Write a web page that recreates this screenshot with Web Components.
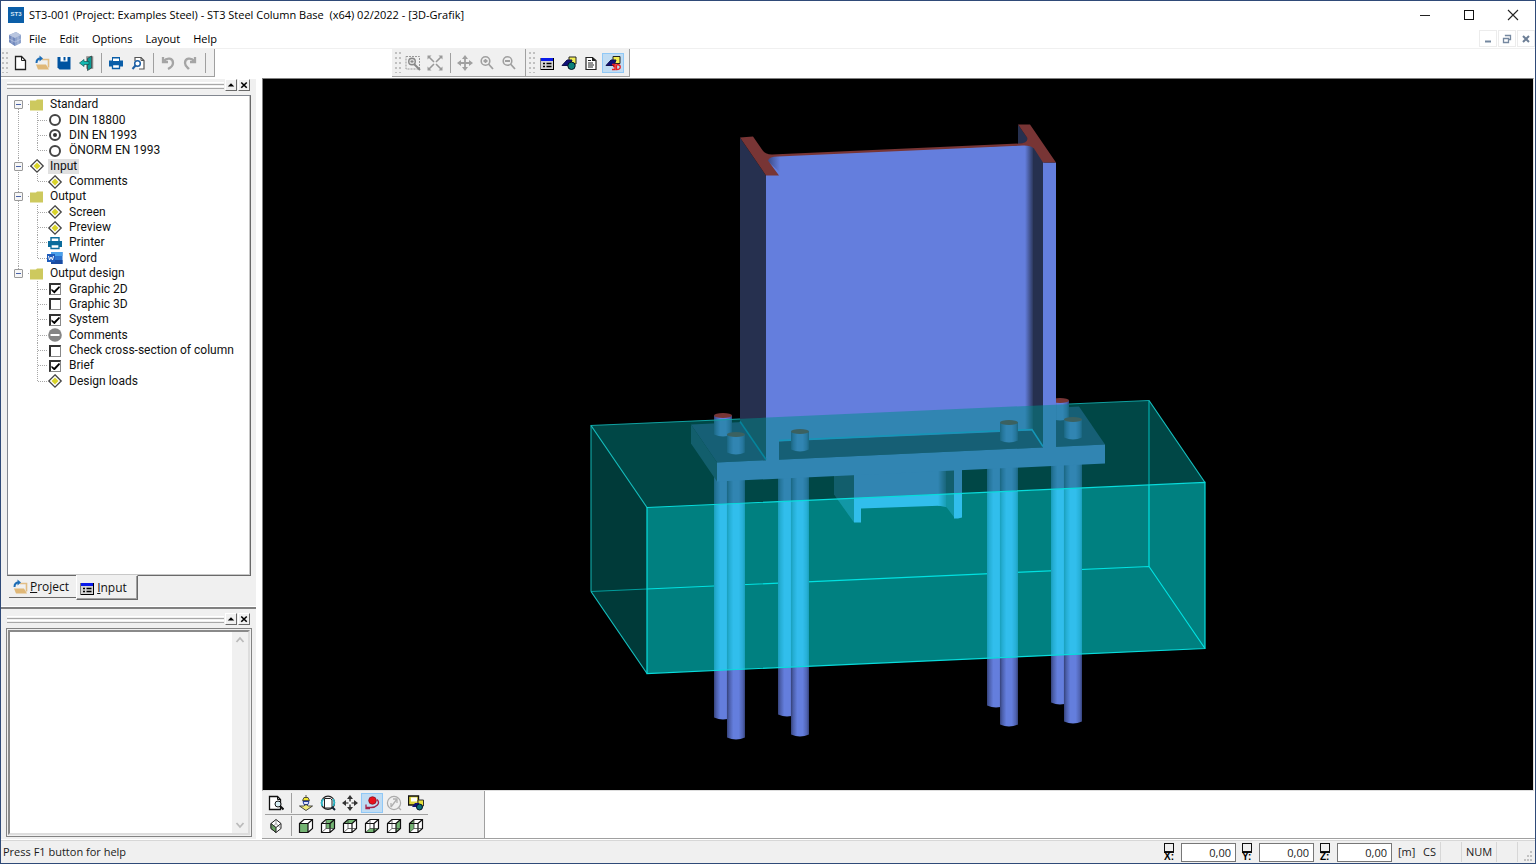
<!DOCTYPE html>
<html lang="en">
<head>
<meta charset="utf-8">
<title>ST3-001 - ST3 Steel Column Base</title>
<style>
html,body{margin:0;height:100%}
body{font:11px/16px "Open Sans","Noto Sans",sans-serif;color:#1a1a1a;background:#fff}
</style>
</head>
<body>
<app-window></app-window>
<script>
const ICONS = {
  app:`<rect width="16" height="16" fill="#0a5ea8"/><text x="8" y="9" font-family="Liberation Sans,sans-serif" font-size="6" font-weight="bold" fill="#d5e6f5" text-anchor="middle">ST3</text>`,
  cube:`<path d="M2 4 9 1l5 3v8l-6 3-6-4z" fill="#8ea3cc"/><path d="M2 4l6 3v8l-6-4z" fill="#7289bd"/><path d="M2 4 9 1l5 3-6 3z" fill="#b9c6e0"/><path d="M5 5.500v7M2 8l6 3 6-3M11 5.500v8" stroke="#c9d4ea" stroke-width=".6" fill="none"/>`,
  doc:`<path d="M3.500 1.500h6l4 4v9h-10z" fill="#fff" stroke="#222" stroke-width="1.300"/><path d="M9.500 1.500v4h4" fill="none" stroke="#222"/>`,
  open:`<path d="M8 4.500h6.500v8" fill="none" stroke="#e2bd84" stroke-width="1.600"/><path d="M2 9.500h10l3 5H4z" fill="#e0b878"/><path d="M2.500 8c0-3 1-4.500 4-4.500" fill="none" stroke="#1c6cb5" stroke-width="2"/><path d="M5.500.500 9 3.500 5.500 6.500z" fill="#1c6cb5"/>`,
  save:`<path d="M1.500 2h13v12.500H3.500l-2-2z" fill="#0053a0"/><path d="M4.500 1.500h7v5h-7z" fill="#fff"/><path d="M7.500 2h2v3.500h-2z" fill="#0053a0"/>`,
  exit:`<path d="M9 2h5.500v11H9z" fill="#fff" stroke="#888" stroke-width="1.500"/><path d="M9.500 3.500l4-2.500v12l-4 2.500z" fill="#0a9c96" stroke="#344" stroke-width=".8"/><path d="M6 4.500 1.500 8 6 11.500V9.500h5v-3H6z" fill="#14b8b0" stroke="#155" stroke-width=".7"/>`,
  print:`<path d="M4 2h8v4H4z" fill="#0a5ea8"/><path d="M1 5.500h14v6H1z" fill="#0a5ea8"/><path d="M5 3.500h6V6H5z" fill="#fff"/><path d="M4.500 9.500h7v4h-7z" fill="#fff" stroke="#0a5ea8" stroke-width="1.300"/>`,
  preview:`<path d="M5 6V2.500h6l3 3v8.500H9" fill="#fff" stroke="#555" stroke-width="1.200"/><path d="M11 2.500v3h3" fill="none" stroke="#555"/><circle cx="7.500" cy="8.500" r="2.800" fill="#fff" stroke="#1c5fa5" stroke-width="1.500"/><path d="M5.500 10.500 2.500 14" stroke="#1c5fa5" stroke-width="2"/>`,
  undo:`<path d="M3 2v5h5M3.500 6.500C7 2 13 3 13 8c0 3-3 5-5 6" fill="none" stroke="#a5a5a5" stroke-width="2.300"/>`,
  redo:`<path d="M13 2v5H8M12.500 6.500C9 2 3 3 3 8c0 3 2 4 4 6" fill="none" stroke="#a5a5a5" stroke-width="2.300"/>`,
  zoomsel:`<rect x="1" y="1.500" width="13.500" height="12.500" fill="none" stroke="#999" stroke-dasharray="2 1"/><circle cx="7" cy="6.500" r="3.300" fill="#ddd" stroke="#888" stroke-width="1.400"/><path d="M7 5v3M5.500 6.500h3" stroke="#888"/><path d="M9 9l6 6" stroke="#888" stroke-width="2"/>`,
  extents:`<path d="M2 2l5 5M14 2 9 7M2 14l5-5M14 14 9 9" stroke="#999" stroke-width="1.600"/><path d="M.500.500h4l-4 4zM15.500.500h-4l4 4zM.500 15.500h4l-4-4zM15.500 15.500h-4l4-4z" fill="#999"/>`,
  movegray:`<path d="M8 2v12M2 8h12" stroke="#a0a0a0" stroke-width="1.800"/><path d="M8 0l3 4H5zM8 16l3-4H5zM0 8l4-3v6zM16 8l-4-3v6z" fill="#a0a0a0"/>`,
  zoomin:`<circle cx="6.500" cy="6" r="4.300" fill="none" stroke="#a0a0a0" stroke-width="1.600"/><path d="M6.500 4v4M4.500 6h4M9.500 9l4.500 5" stroke="#a0a0a0" stroke-width="1.800"/>`,
  zoomout:`<circle cx="6.500" cy="6" r="4.300" fill="none" stroke="#a0a0a0" stroke-width="1.600"/><path d="M4 6h5M9.500 9l4.500 5" stroke="#a0a0a0" stroke-width="1.800"/>`,
  form:`<rect x="1.500" y="3" width="13.500" height="12" fill="#000"/><rect x="2" y="4" width="12" height="10" fill="#d5d5d5"/><rect x="2" y="3" width="12" height="3" fill="#0a1bea"/><path d="M4 8.500h2M7.500 8.500h5M4 11.500h2M7.500 11.500h5" stroke="#000" stroke-width="1.500"/>`,
  shapes:`<path d="M8 2h7v7H8z" fill="#f2ee52" stroke="#222"/><path d="M1 10.500 6 5h5l-2 5.500z" fill="#10107a" stroke="#10104a"/><circle cx="10.500" cy="10.800" r="3.700" fill="#0c8078" stroke="#012"/>`,
  page:`<path d="M3 2.500h6.500l3.500 3v9H3z" fill="#fff" stroke="#222" stroke-width="1.200"/><path d="M9 2v4h4" fill="#222"/><path d="M5 5.500h3M5 8h5M5 10h6M5 12h5" stroke="#222"/>`,
  shapes3d:`<path d="M8 1.500h7v7H8z" fill="#f2ee52" stroke="#222"/><path d="M1 10.500 6 5h5l-2 5.500z" fill="#10107a" stroke="#10104a"/><path d="M7 9.500h3v2H8h2v3H7M11.500 9.500v5c5 0 5-5 0-5" stroke="#e81c1c" stroke-width="1.300" fill="none"/>`,
  lens:`<path d="M1.500 1.500h8l3 3v10h-11z" fill="#fff" stroke="#111" stroke-width="1.300"/><path d="M9.500 1.500v3h3" fill="none" stroke="#111"/><circle cx="10" cy="9" r="3" fill="#d8f0f6" stroke="#111"/><path d="M12 11l3.500 3.500" stroke="#111" stroke-width="2"/>`,
  lamp:`<path d="M8 0v3M6 2.500h4l1.500 3h-7z" fill="#efe32e" stroke="#443" stroke-width=".9"/><path d="M5 6.500h6l-1 3H6z" fill="#dfe3ff" stroke="#223a9a"/><path d="M1.500 11h4L8 9.500 10.500 11h4L8 15.500z" fill="#efe97a" stroke="#333" stroke-width=".9"/>`,
  fit:`<path d="M4.500 3.500h6l1.500 1.500v8H4.500z" fill="#fff" stroke="#222"/><circle cx="8" cy="7.800" r="6.600" fill="none" stroke="#222" stroke-width="1.200"/><path d="M2.500 11a6 6 0 0 1 1-7M13 4a6 6 0 0 1 0 7" fill="none" stroke="#28b6c8" stroke-width="1.700"/><path d="M12 12l3 3" stroke="#123" stroke-width="2"/>`,
  move:`<path d="M8 2v12M2 8h12" stroke="#111" stroke-width="1.200"/><path d="M8 0l3 4H5zM8 16l3-4H5zM0 8l4-3v6zM16 8l-4-3v6z" fill="#333"/><path d="M6.500 6.500h3v3h-3z" fill="#fff"/>`,
  orbit:`<path d="M13 4.500c4 4-1 8-6 8H2" fill="none" stroke="#a4234a" stroke-width="1.300"/><path d="M2 9.500v4h4" fill="none" stroke="#a4234a" stroke-width="1.300"/><circle cx="8.500" cy="5.500" r="3.800" fill="#e8101b" stroke="#7b1020" stroke-width=".7"/>`,
  dial:`<circle cx="8" cy="8" r="6.600" fill="none" stroke="#aaa" stroke-width="1.200"/><path d="M7 4h4v4M11 4 5 12M5 8v4M12 12l3 3" fill="none" stroke="#b0b0b0" stroke-width="1.300"/>`,
  snap:`<path d="M.500 1h10v9H.500z" fill="#dcd43a" stroke="#111" stroke-width="1.400"/><path d="M3 2.500h6v4H3z" fill="#fff"/><path d="M10 5h5.500v6H10z" fill="#e8e23d" stroke="#333"/><path d="M4 12l3-4h4v4z" fill="#10107a"/><circle cx="11.500" cy="12" r="3" fill="#0c7078" stroke="#012"/>`,
  iso:`<path d="M8 1.500l5 4v5l-5 4-5-4v-5z" fill="#fff" stroke="#222"/><path d="M3 5.500l5 4v5l-5-4z" fill="#6aa564" stroke="#222"/><path d="M8 9.500l5-4" stroke="#222"/><path d="M8 1.500v4l-5 5M8 5.500l5 5" stroke="#555" stroke-width=".6" fill="none"/>`,
  folder:`<path d="M1 3.500h6l1-1h6v11H1z" fill="#cdc95e"/>`,
  diamond:`<path d="M8 1.800 14.200 8 8 14.200 1.800 8z" fill="#fff" stroke="#444" stroke-width="1.300"/><path d="M8 4.500 11.500 8 8 11.500 4.500 8z" fill="#d9d42a"/>`,
  printer:`<path d="M4 2.700h8v4H4z" fill="#fff" stroke="#0b6c9c" stroke-width="1.400"/><path d="M1 6h14v6H1z" fill="#0b6c9c"/><path d="M4 9.500h8v4H4z" fill="#fff" stroke="#0b6c9c" stroke-width="1.300"/>`,
  word:`<path d="M4 2h11.500v12H4z" fill="#2b74d0"/><path d="M4 2h11.500v4H4z" fill="#4aa0ea"/><path d="M4 10h11.500v4H4z" fill="#1a4ba0"/><rect y="4" width="8" height="8" fill="#1d5cbc"/><path d="M1.500 6l1 4L4 7l1.500 3 1-4" fill="none" stroke="#fff"/>`,
  minus:`<circle cx="8" cy="8" r="6.800" fill="#858585"/><path d="M3.500 8h9" stroke="#fff" stroke-width="2"/>`,
  up:`<path d="M1.500 11h13L8 4.500z" fill="#000"/>`,
  x:`<path d="M2.500 3l11 10.500M13.500 3l-11 10.500" stroke="#000" stroke-width="3.200"/>`,
  min:`<path d="M3 8.500h10" stroke="#222"/>`,
  max:`<rect x="3.500" y="3.500" width="9" height="9" fill="none" stroke="#111"/>`,
  close:`<path d="M3 3l10 10M13 3 3 13" stroke="#222" stroke-width="1.100"/>`,
  mdimin:`<path d="M5 10.500h6" stroke="#7588a0" stroke-width="2"/>`,
  mdires:`<path d="M6.500 5V4.500h5v4H10M6 4.500h6" fill="none" stroke="#7588a0" stroke-width="1.300"/><path d="M4.500 7.500h5v4h-5zM4 7.500h6" fill="none" stroke="#7588a0" stroke-width="1.300"/>`,
  mdix:`<path d="M5 5l6 6M11 5l-6 6" stroke="#6d7f96" stroke-width="2"/>`,
  chevup:`<path d="M4.500 10 8 6l3.500 4" fill="none" stroke="#bbb" stroke-width="1.800"/>`,
  chevdn:`<path d="M4.500 6 8 10l3.500-4" fill="none" stroke="#bbb" stroke-width="1.800"/>`,
  grip:`<path d="M11 4h2v2h-2zM8 8h2v2H8zM11 8h2v2h-2zM5 12h2v2H5zM8 12h2v2H8zM11 12h2v2h-2z" fill="#c2c2c2"/>`
};
/* The six view cubes share one wire frame; each paints another face green. */
const FACES = {
  front:"M1.500 5.500h8.500v9H1.500z", back:"M6 1.500h8.500v9H6z", top:"M1.500 5.500 6 1.500h8.500l-4.500 4z",
  bottom:"M1.500 14.500 6 10.500h8.500l-4.500 4z", right:"M10 5.500l4.500-4v9l-4.500 4z", left:"M1.500 5.500l4.500-4v9l-4.500 4z"
};
for (const [name, d] of Object.entries(FACES)) {
  ICONS["face-" + name] = `<path d="M1.500 5.500 6 1.500h8.500v9l-4.500 4h-8.500z" fill="#fff"/><path d="${d}" fill="#74b473"/><path d="M1.500 5.500 6 1.500h8.500v9l-4.500 4h-8.500zM1.500 5.500h8.500v9M10 5.500l4.500-4" fill="none" stroke="#111" stroke-width="1.200"/>` + (name === "front" ? "" : `<path d="M6 1.500v9h8M6 10.500l-4.500 4" fill="none" stroke="#333" stroke-width=".7"/>`);
}

function define(name, html) {
  customElements.define(name, class extends HTMLElement {
    connectedCallback() {
      if (this.shadowRoot) return;
      this.attachShadow({mode: "open"}).innerHTML = typeof html === "function" ? html(this) : html;
    }
  });
}

define("ui-icon", el => `<style>:host{display:block;width:16px;height:16px;flex:none}svg{display:block;width:100%;height:100%}</style>
<svg viewBox="0 0 16 16" aria-hidden="true">${ICONS[el.getAttribute("name")] || ""}</svg>`);

define("tool-button", el => `<style>
:host{display:block;flex:none}
button{box-sizing:border-box;width:22px;height:20px;padding:0;border:1px solid transparent;background:none;display:grid;place-items:center}
:host([active]) button{background:#c0dcf3;border-color:#90c8f6}
</style><button type="button" aria-label="${el.getAttribute("label")}"><ui-icon name="${el.getAttribute("icon")}"></ui-icon></button>`);

define("tool-sep", `<style>:host{display:block;flex:none;width:8px;height:20px;background:linear-gradient(#a0a0a0,#a0a0a0) center/1px 100% no-repeat}</style>`);

define("tool-bar", `<style>
:host{display:flex;box-sizing:border-box;height:28px;align-items:center;background:#f0f0f0;border-right:1px solid #a0a0a0;border-bottom:1px solid #a0a0a0;padding-right:5px}
.grip{width:8px;align-self:stretch;margin:3px 0;background:radial-gradient(circle at 1px 1px,#c0c0c0 1px,transparent 1px) 1px 0/4px 5px}
</style><div class="grip"></div><slot></slot>`);

define("title-bar", `<style>
:host{display:flex;align-items:center;height:28px;padding-left:7px;background:#fff;color:#000}
h1{font:inherit;margin:0 0 0 5px;flex:1;white-space:pre}
button{width:44px;height:28px;border:0;padding:0;background:none;display:grid;place-items:center}
</style><ui-icon name="app"></ui-icon><h1>ST3-001 (Project: Examples Steel) - ST3 Steel Column Base  (x64) 02/2022 - [3D-Grafik]</h1>
<button aria-label="Minimize"><ui-icon name="min"></ui-icon></button><button aria-label="Maximize"><ui-icon name="max"></ui-icon></button><button aria-label="Close"><ui-icon name="close"></ui-icon></button>`);

define("menu-bar", `<style>
:host{display:flex;align-items:center;height:19px;padding-left:6px;background:#fff;border-bottom:1px solid #f0f0f0}
nav{display:flex;gap:13px;flex:1;margin-left:6px}
nav button{border:0;padding:0;background:none;font:inherit;color:#000}
.mdi{display:flex;gap:1px}
.mdi button{box-sizing:border-box;width:18px;height:17px;padding:0;border:1px solid #ececec;background:#fff;display:grid;place-items:center}
</style><ui-icon name="cube"></ui-icon><nav><button>File</button><button>Edit</button><button>Options</button><button>Layout</button><button>Help</button></nav>
<div class="mdi"><button aria-label="Minimize view"><ui-icon name="mdimin"></ui-icon></button><button aria-label="Restore view"><ui-icon name="mdires"></ui-icon></button><button aria-label="Close view"><ui-icon name="mdix"></ui-icon></button></div>`);

define("dock-header", `<style>
:host{display:flex;height:12px;align-items:center;padding:0 6px}
.bars{flex:1;height:7px;box-sizing:border-box;background:linear-gradient(#fff 1px,#f0f0f0 1px,#f0f0f0 2px,#a8a8a8 2px,#a8a8a8 3px,#f0f0f0 3px,#f0f0f0 4px,#fff 4px,#fff 5px,#f0f0f0 5px,#f0f0f0 6px,#a8a8a8 6px)}
button{box-sizing:border-box;width:12px;height:12px;margin-left:1px;padding:0;border:1px solid;border-color:#fff #696969 #696969 #fff;background:#f0f0f0;display:grid;place-items:center}
ui-icon{width:8px;height:8px}
</style><div class="bars"></div><button aria-label="Collapse"><ui-icon name="up"></ui-icon></button><button aria-label="Close panel"><ui-icon name="x"></ui-icon></button>`);

const TREE = [
  ["Standard","folder",[["DIN 18800","radio"],["DIN EN 1993","radio",1],["ÖNORM EN 1993","radio"]]],
  ["Input","diamond",[["Comments","diamond"]]],
  ["Output","folder",[["Screen","diamond"],["Preview","diamond"],["Printer","printer"],["Word","word"]]],
  ["Output design","folder",[["Graphic 2D","check",1],["Graphic 3D","check"],["System","check",1],["Comments","minus"],["Check cross-section of column","check"],["Brief","check",1],["Design loads","diamond"]]]
];
define("tree-view", () => {
  let id = 0;
  const leaf = ([text, kind, on]) => {
    const box = kind === "radio" || kind === "check";
    const key = "n" + id++;
    return `<li class="row leaf"><i class="rail"></i><i class="branch"></i><span class="ic">${box
      ? `<input id="${key}" type="${kind === "radio" ? "radio" : "checkbox"}" ${kind === "radio" ? 'name="standard"' : ""} ${on ? "checked" : ""}>`
      : `<ui-icon name="${kind}"></ui-icon>`}</span>${box ? `<label for="${key}">${text}</label>` : `<span class="t">${text}</span>`}</li>`;
  };
  return `<style>
:host{display:block;box-sizing:border-box;background:#fff;border:1px solid;border-color:#828790 #696969 #696969 #828790;box-shadow:inset -1px -1px #c8c8c8;font:12px/15px Roboto,"Noto Sans",sans-serif;color:#111;overflow:hidden}
ul{list-style:none;margin:0;padding:0}
.tree{display:grid;grid-auto-rows:1fr;height:292px;padding:1px}
.group,.group ul{display:contents}
.row{display:flex;align-items:center;white-space:nowrap;min-height:0}
.rail{width:19px;align-self:stretch;display:grid;place-items:center;--v:repeating-linear-gradient(#a8a8a8 0 1px,#fff 1px 2px);background:var(--v) 9px 0/1px 100% no-repeat}
.group:first-child .head .rail{background-position:9px 8px}
.group:last-child .head .rail{background-size:1px 50%}
.group:last-child .leaf .rail{background:none}
.branch{width:19px;align-self:stretch;background:repeating-linear-gradient(#a8a8a8 0 1px,#fff 1px 2px) 9px 0/1px 100% no-repeat,repeating-linear-gradient(90deg,#a8a8a8 0 1px,#fff 1px 2px) 10px 50%/9px 1px no-repeat}
.leaf:last-child .branch{background-size:1px 50%,9px 1px}
.exp{box-sizing:border-box;width:9px;height:9px;border:1px solid #999;border-radius:1px;padding:0;background:linear-gradient(#4a63a8,#4a63a8) center/5px 1px no-repeat #f6f6f6}
.dash{width:6px;height:1px;background:repeating-linear-gradient(90deg,#a8a8a8 0 1px,#fff 1px 2px);margin-right:-6px}
.head ui-icon{margin:0 2px 0 1px}
.t,label{margin-left:6px}
.head .t{margin:0 0 0 1px;padding:0 2px}
.sel{background:#e0e0e0}
.ic{width:16px;display:grid;place-items:center}
input{appearance:none;box-sizing:border-box;width:12px;height:12px;margin:0;border:2px solid #444;background:#fff;display:grid;place-items:center}
input[type=radio]{border-radius:50%}
input[type=radio]:checked::before{content:"";width:4px;height:4px;border-radius:50%;background:#333}
input[type=checkbox]{border-width:2px 1px 1px 2px;border-color:#333 #888 #888 #333}
input[type=checkbox]:checked::before{content:"";width:9px;height:8px;background:#000;clip-path:polygon(5% 40%,35% 65%,90% 5%,100% 25%,38% 100%,5% 65%)}
</style><ul class="tree">${TREE.map(([t, ic, kids]) => `<li class="group"><div class="row head"><span class="rail"><button class="exp" aria-label="Collapse ${t}"></button></span><i class="dash"></i><ui-icon name="${ic}"></ui-icon><span class="t${t === "Input" ? " sel" : ""}">${t}</span></div><ul>${kids.map(leaf).join("")}</ul></li>`).join("")}</ul>`;
});

define("dock-tabs", `<style>
:host{display:flex;align-items:flex-start;height:30px;padding-left:8px}
button{box-sizing:border-box;display:flex;align-items:center;gap:2px;height:22px;padding:0 7px 0 3px;border:0;border-bottom:1px solid #696969;background:#f0f0f0;font-family:inherit;font-size:12px;line-height:16px;color:#111}
button.on{height:25px;padding:0 10px 0 2px;margin-top:-1px;border:1px solid;border-color:#f0f0f0 #696969 #696969 #fff;box-shadow:inset -1px -1px #a0a0a0}
</style><button><ui-icon name="open"></ui-icon><span><u>P</u>roject</span></button><button class="on"><ui-icon name="form"></ui-icon><span><u>I</u>nput</span></button>`);

define("message-box", `<style>
:host{display:flex;box-sizing:border-box;border:1px solid #828282;padding:1px;background:#f0f0f0}
.in{display:flex;flex:1;border:2px solid;border-color:#8a8a8a #ddd #ddd #8a8a8a;background:#fff}
textarea{flex:1;min-width:0;border:0;padding:2px;margin:0;resize:none;outline:0;background:#fff;font:inherit}
.sb{width:16px;background:#f0f0f0;display:flex;flex-direction:column;justify-content:space-between}
.sb button{border:0;padding:0;background:none;height:16px}
</style><div class="in"><textarea aria-label="Messages"></textarea><div class="sb"><button aria-label="Scroll up"><ui-icon name="chevup"></ui-icon></button><button aria-label="Scroll down"><ui-icon name="chevdn"></ui-icon></button></div></div>`);

define("side-dock", `<style>
:host{display:flex;flex-direction:column;box-sizing:border-box;width:255px;background:#f0f0f0}
tree-view{flex:1;margin:4px 5px 0 6px;min-height:296px}
hr{width:100%;height:1px;border:0;border-top:1px solid #fff;margin:0 0 4px;background:#808080;padding-bottom:1px}
message-box{height:209px;margin:3px 4px 2px 5px}
</style><dock-header></dock-header><tree-view></tree-view><dock-tabs></dock-tabs><hr><dock-header></dock-header><message-box></message-box>`);

/* One anchor bar: shaded cylinder from y0 to y1, optionally with its cut face on top. */
const bar = (x, y0, y1, cap) => `<path d="M${x} ${y0}h18V${y1 - 2}q-9 4-18 0z" fill="url(#cyl)"/>` + (cap ? `<ellipse cx="${x + 9}" cy="${y0}" rx="9" ry="2.500" fill="#783535"/>` : "");
define("scene-view", `<style>:host{display:block;background:#000;min-height:0;overflow:hidden}svg{display:block;width:100%;height:100%}</style>
<svg viewBox="263 80 1270 710" role="img" aria-label="Column base, 3D view">
<defs>
<linearGradient id="cyl"><stop offset="0" stop-color="#35427a"/><stop offset=".12" stop-color="#4a5da8"/><stop offset=".35" stop-color="#647edd"/><stop offset=".65" stop-color="#647edd"/><stop offset=".88" stop-color="#4f62b0"/><stop offset="1" stop-color="#35427a"/></linearGradient>
<linearGradient id="fil"><stop offset="0" stop-color="#647edd"/><stop offset="1" stop-color="#26304f"/></linearGradient>
<linearGradient id="fil2"><stop offset="0" stop-color="#3a4a86"/><stop offset="1" stop-color="#647edd"/></linearGradient>
</defs>
<g fill="none" stroke="#00c8c8" stroke-width="1.200"><path d="M591 592 1149 567 1205 649"/><path d="M1149 401V567"/></g>
${bar(714,470,720)}${bar(778,468,717)}${bar(987,460,708)}${bar(1051,458,705)}
${bar(727,470,740)}${bar(791,468,737)}${bar(1000,460,727)}${bar(1064,458,724)}
<path d="M834 474 854 473V523L834 495z" fill="#26304f"/>
<path d="M854 465H946V506L861 509V523H854z" fill="#647edd"/>
<path d="M938 464H948V508L938 506z" fill="url(#fil)"/><path d="M946 464H955V519L946 507z" fill="#26304f"/><path d="M954 464H962V518L958 519H954z" fill="#647edd"/>
<path d="M691 425 1079 407 1105 445 717 463z" fill="#2d3260"/>
<path d="M691 425 717 463V482L691 444z" fill="#26304f"/>
<path d="M717 463 1105 445V464L717 482z" fill="#647edd"/>
${bar(714,416,437,1)}${bar(1051,401,421,1)}
<path d="M1018 125V145L1030 142z" fill="#26304f"/>
<path d="M740 138 766 176V460L740 422z" fill="#26304f"/>
<path d="M766 156 1034 145V431L779 442V464H766z" fill="#647edd"/>
<path d="M768 157 780 156V173L768 162z" fill="url(#fil2)"/>
<path d="M1025 145H1034V431H1025z" fill="url(#fil)"/>
<path d="M1033 145 1044 163V448L1033 431z" fill="#26304f"/>
<path d="M1043 163H1056V452H1043z" fill="#647edd"/>
<path d="M740 138 753 137 762 150Q765 155 772 155L1020 144Q1029 143 1027 138L1018 125H1030L1056 163H1043L1034 149Q1031 146 1024 146L778 157Q769 157 768 161L779 176H766z" fill="#783535"/>
<path d="M779 441 1032 430 1043 447" fill="none" stroke="#2aa3e8" stroke-width="1.500"/><path d="M740 422 766 460" stroke="#0b7db0" stroke-width="1.500"/>
${bar(727,435,455,1)}${bar(791,432,452,1)}${bar(1000,423,443,1)}${bar(1064,420,440,1)}
<path d="M591 426 1149 401 1205 483 647 508z" fill="rgb(0,139,137)" fill-opacity=".51"/>
<path d="M591 426 647 508V674L591 592z" fill="rgb(0,114,112)" fill-opacity=".51"/>
<path d="M647 508 1205 483V649L647 674z" fill="rgb(0,251,251)" fill-opacity=".51"/>
<path d="M591 592V426L740 419.500M1069 404.500 1149 401" fill="none" stroke="#10a0a0" stroke-width="1.200"/>
<path d="M591 426 647 508M591 592 647 674M1149 401 1205 483" stroke="#14bcbc" stroke-width="1.200"/>
<path d="M647 508 1205 483V649L647 674z" fill="none" stroke="#08dcdc" stroke-width="1.200"/>
</svg>`);

const btn = (icon, label, extra = "") => `<tool-button icon="${icon}" label="${label}" ${extra}></tool-button>`;
define("view-bar", `<style>
:host{display:flex;background:#fff;border-bottom:1px solid #a0a0a0}
.box{display:grid;justify-items:start;align-content:start;box-sizing:border-box;width:223px;height:47px;padding:2px 0 0 3px;background:#f0f0f0;border-right:1px solid #a0a0a0}
.r{display:flex;height:20px}
hr{width:163px;height:1px;margin:1px 0;border:0;background:#a0a0a0}
</style><div class="box"><div class="r">${btn("lens","Page preview")}<tool-sep></tool-sep>${btn("lamp","Light")}${btn("fit","Fit")}${btn("move","Pan")}${btn("orbit","Rotate","active")}${btn("dial","Spin")}${btn("snap","Copy view")}</div><hr>
<div class="r">${btn("iso","Isometric")}<tool-sep></tool-sep>${["front","back","top","bottom","right","left"].map(f => btn("face-" + f, "View " + f)).join("")}</div></div>`);

define("coord-field", el => {
  const a = el.getAttribute("axis");
  return `<style>
:host{display:flex;align-items:center;gap:6px}
label{display:grid;width:11px;justify-items:start;font:bold 10px/8px "Liberation Sans",sans-serif;color:#000}
label i{box-sizing:border-box;width:10px;height:10px;border:1px solid #111;border-bottom-width:2px}
input{box-sizing:border-box;width:55px;height:19px;padding:0 4px;border:1px solid #777;outline:0;background:#fff;text-align:right;font:inherit;color:#222}
</style><label for="c"><i></i>${a}:</label><input id="c" value="0,00">`;
});

define("status-bar", `<style>
:host{display:flex;align-items:center;height:22px;background:#f0f0f0;border-top:1px solid #d7d7d7;padding-left:2px}
.msg{flex:1}
coord-field{margin-right:6px}
.u{width:25px}
.cell{box-sizing:border-box;height:20px;line-height:20px;border-right:1px solid #d7d7d7}
.cs{width:18px}.gap{width:21px}.num{width:35px;padding-left:4px}
ui-icon{align-self:flex-end;margin-left:1px}
</style><span class="msg">Press F1 button for help</span><coord-field axis="X"></coord-field><coord-field axis="Y"></coord-field><coord-field axis="Z"></coord-field>
<span class="u">[m]</span><span class="cell cs">CS</span><span class="cell gap"></span><span class="cell num">NUM</span><span class="cell gap"></span><ui-icon name="grip"></ui-icon>`);

define("app-window", `<style>
:host{display:flex;flex-direction:column;box-sizing:border-box;height:100vh;min-height:640px;border:1px solid #2f4a78;background:#fff}
.bars{display:flex;height:29px;background:#fff}
.second{margin-left:177px;padding-left:2px}
.third{padding-left:2px}
main{display:flex;flex:1;min-height:0}
.view{display:flex;flex-direction:column;flex:1;min-width:0;margin-left:6px}
scene-view{flex:1;margin-right:1px;border:1px solid #808080;border-right-color:#ddd;border-bottom-color:#ddd}
status-bar{margin-top:1px}
side-dock{border-top:1px solid #fff}
</style><title-bar></title-bar><menu-bar></menu-bar>
<div class="bars"><tool-bar>${btn("doc","New")}${btn("open","Open")}${btn("save","Save")}${btn("exit","Exit")}<tool-sep></tool-sep>${btn("print","Print")}${btn("preview","Preview")}<tool-sep></tool-sep>${btn("undo","Undo")}${btn("redo","Redo")}<tool-sep></tool-sep></tool-bar>
<tool-bar class="second">${btn("zoomsel","Zoom window")}${btn("extents","Zoom all")}<tool-sep></tool-sep>${btn("movegray","Pan")}${btn("zoomin","Zoom in")}${btn("zoomout","Zoom out")}</tool-bar>
<tool-bar class="third">${btn("form","Form")}${btn("shapes","Graphic")}${btn("page","Text")}${btn("shapes3d","3D graphic","active")}</tool-bar></div>
<main><side-dock></side-dock><div class="view"><scene-view></scene-view><view-bar></view-bar></div></main><status-bar></status-bar>`);
</script>
</body>
</html>
